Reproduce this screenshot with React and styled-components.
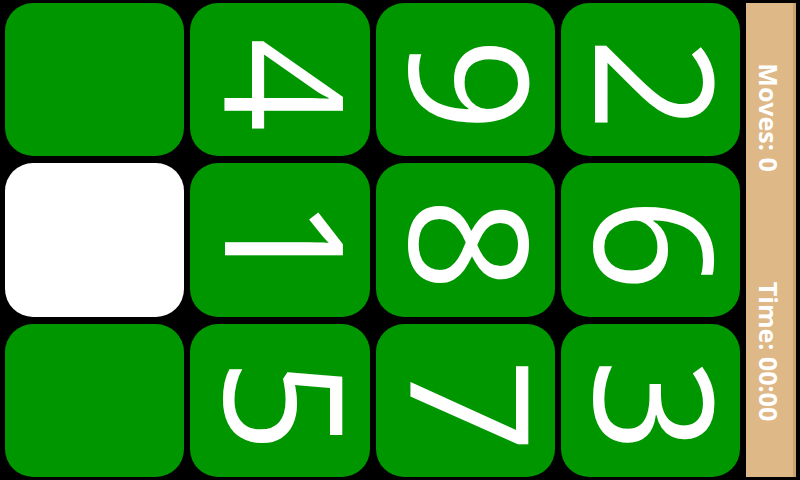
import React from "react";
import styled, { createGlobalStyle } from "styled-components";

const GlobalStyle = createGlobalStyle`
  html, body {
    margin: 0;
    padding: 0;
    background: #000;
    width: 800px;
    height: 480px;
    overflow: hidden;
  }
`;

// null = empty green tile, "blank" = the white hole
const tiles = [null, 4, 9, 2, "blank", 1, 8, 6, null, 5, 7, 3];

export default function App() {
  return (
    <>
      <GlobalStyle />
      <Screen>
        <Board>
          {tiles.map((t, i) => (
            <Tile key={i} $blank={t === "blank"}>
              {typeof t === "number" && <Digit>{t}</Digit>}
            </Tile>
          ))}
        </Board>
        <Sidebar>
          <Stat $first>
            <StatText>Moves: 0</StatText>
          </Stat>
          <Stat>
            <StatText>Time: 00:00</StatText>
          </Stat>
        </Sidebar>
      </Screen>
    </>
  );
}

const Screen = styled.div`
  width: 800px;
  height: 480px;
  box-sizing: border-box;
  padding: 3px 4px 3px 5px;
  display: flex;
  gap: 6px;
  background: #000;
`;

const Board = styled.div`
  flex: 1;
  display: grid;
  grid-template-columns: repeat(4, 1fr);
  grid-template-rows: repeat(3, 1fr);
  column-gap: 6px;
  row-gap: 7px;
`;

const Tile = styled.div`
  background: #${(p) => (p.$blank ? "ffffff" : "009600")};
  border-radius: 28px;
  display: flex;
  align-items: center;
  justify-content: center;
`;

const Digit = styled.span`
  display: block;
  transform: translate(8px, 5px) rotate(90deg);
  font-family: "Open Sans", "DejaVu Sans", sans-serif;
  font-weight: 370;
  font-size: 164px;
  line-height: 0.85;
  color: #fff;
`;

const Sidebar = styled.div`
  width: 50px;
  flex-shrink: 0;
  background: #deb887;
  border-right: 3px solid #c9a470;
  box-sizing: border-box;
  padding-bottom: 12px;
  display: flex;
  flex-direction: column;
`;

const Stat = styled.div`
  flex: 1;
  display: flex;
  align-items: center;
  justify-content: center;
  padding-bottom: ${(p) => (p.$first ? "6px" : "0")};
`;

const StatText = styled.span`
  display: block;
  transform: translateX(-1px) rotate(90deg);
  white-space: nowrap;
  font-family: "Open Sans", "DejaVu Sans", sans-serif;
  font-weight: 700;
  font-size: 25px;
  line-height: 1;
  color: #fff;
`;
